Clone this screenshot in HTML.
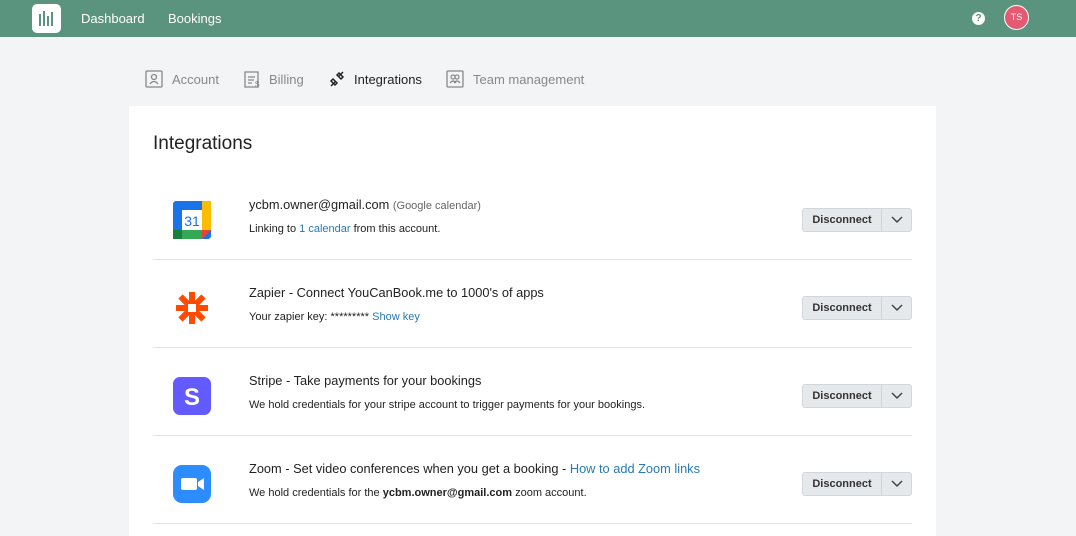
<!DOCTYPE html>
<html><head><style>
*{box-sizing:border-box;margin:0;padding:0}
body{width:1076px;height:530px;overflow:hidden;background:#f2f4f6;font-family:"Liberation Sans",Arial,sans-serif;position:relative}
.hdr{position:absolute;left:0;top:0;width:1076px;height:37px;background:#5a937e}
.logo{position:absolute;left:32px;top:4px;width:29px;height:29px;background:#fff;border-radius:5px}
.nav{position:absolute;top:11px;color:#fff;font-size:13px}
.help{position:absolute;left:972px;top:12px;width:13px;height:13px;border-radius:50%;background:#fff;color:#5a937e;font-size:10px;font-weight:bold;text-align:center;line-height:13px}
.av{position:absolute;left:1004px;top:5px;width:25px;height:25px;border-radius:50%;background:#e45a73;border:1px solid #fff;color:#fff;font-size:9px;text-align:center;line-height:23px}
.tab{position:absolute;top:72px;font-size:13px;color:#888}
.ti{position:absolute;top:70px;width:18px;height:18px}
.card{position:absolute;left:129px;top:106px;width:807px;height:430px;background:#fff}
h1{position:absolute;left:24px;top:27px;font-size:19px;font-weight:normal;color:#222}
.row{position:absolute;left:24px;width:759px;height:88px;border-bottom:1px solid #e3e3e3}
.ic{position:absolute;left:20px;top:29px;width:38px;height:38px}
.t1{position:absolute;left:96px;top:25px;font-size:12.8px;color:#222}
.t2{position:absolute;left:96px;top:51px;font-size:11px;color:#222}
.sm{font-size:11px;color:#666}
a{color:#2a7ab0;text-decoration:none}
.btn{position:absolute;left:649px;top:36px;width:110px;height:24px;background:#e6e9ec;border:1px solid #d3d7db;border-radius:3px;font-size:11px;font-weight:bold;color:#333}
.btn span{position:absolute;left:0;top:0;width:79px;height:22px;line-height:22px;text-align:center;border-right:1px solid #cfd3d7}
.btn svg{position:absolute;left:88px;top:7px}
</style></head><body>
<div class="hdr">
<div class="logo"><svg width="29" height="29"><g stroke="#5a937e" stroke-width="2"><line x1="8" y1="10" x2="8" y2="22"/><line x1="12" y1="7" x2="12" y2="22"/><line x1="16" y1="12" x2="16" y2="22"/><line x1="20" y1="8" x2="20" y2="22"/></g></svg></div>
<div class="nav" style="left:81px">Dashboard</div>
<div class="nav" style="left:168px">Bookings</div>
<div class="help">?</div>
<div class="av">TS</div>
</div>
<svg class="ti" style="left:145px" viewBox="0 0 18 18"><rect x="1" y="1" width="16" height="16" rx="1" fill="none" stroke="#888" stroke-width="1.3"/><circle cx="9" cy="7" r="2.5" fill="none" stroke="#888" stroke-width="1.3"/><path d="M5 14q4-5 8 0" fill="none" stroke="#888" stroke-width="1.3"/></svg>
<div class="tab" style="left:172px">Account</div>
<svg class="ti" style="left:243px" viewBox="0 0 18 18"><path d="M2 2h13v15H2z M5 7h7M5 10h6M5 13h4" fill="none" stroke="#888" stroke-width="1.3"/><text x="12" y="17" font-size="8" fill="#888">$</text></svg>
<div class="tab" style="left:269px">Billing</div>
<svg class="ti" style="left:328px" viewBox="0 0 18 18"><path d="M3 16l4-4M11 6l4-4M5 9l4 4-2 2-4-4zM9 5l4 4 2-2-4-4z" fill="none" stroke="#222" stroke-width="1.5"/></svg>
<div class="tab" style="left:354px;color:#222">Integrations</div>
<svg class="ti" style="left:446px" viewBox="0 0 18 18"><rect x="1" y="1" width="16" height="16" rx="1" fill="none" stroke="#888" stroke-width="1.3"/><circle cx="7" cy="7" r="2" fill="none" stroke="#888" stroke-width="1.2"/><circle cx="11" cy="7" r="2" fill="none" stroke="#888" stroke-width="1.2"/><path d="M4 13q3-4 6 0M8 13q3-4 6 0" fill="none" stroke="#888" stroke-width="1.2"/></svg>
<div class="tab" style="left:473px">Team management</div>
<div class="card">
<h1>Integrations</h1>
<div class="row" style="top:66px">
<svg class="ic" viewBox="0 0 38 38"><rect x="0" y="0" width="38" height="38" rx="3" fill="#1a73e8"/><rect x="29" y="0" width="9" height="29" fill="#fbbc04"/><rect x="0" y="29" width="29" height="9" fill="#34a853"/><rect x="0" y="29" width="9" height="9" fill="#188038"/><path d="M29 29h9l-9 9z" fill="#ea4335"/><rect x="9" y="9" width="20" height="20" fill="#fff"/><text x="19" y="25" font-size="14" text-anchor="middle" fill="#1a73e8" font-family="Liberation Sans">31</text></svg>
<div class="t1">ycbm.owner@gmail.com <span class="sm">(Google calendar)</span></div>
<div class="t2">Linking to <a>1 calendar</a> from this account.</div>
<div class="btn"><span>Disconnect</span><svg width="12" height="8"><path d="M1 1l5 5 5-5" fill="none" stroke="#444" stroke-width="1.5"/></svg></div>
</div>
<div class="row" style="top:154px">
<svg class="ic" viewBox="0 0 38 38"><g stroke="#ff4a00" stroke-width="6"><line x1="19" y1="3" x2="19" y2="35"/><line x1="3" y1="19" x2="35" y2="19"/><line x1="7.5" y1="7.5" x2="30.5" y2="30.5"/><line x1="30.5" y1="7.5" x2="7.5" y2="30.5"/></g><rect x="15" y="15" width="8" height="8" fill="#fff"/></svg>
<div class="t1">Zapier - Connect YouCanBook.me to 1000's of apps</div>
<div class="t2">Your zapier key: ********* <a>Show key</a></div>
<div class="btn"><span>Disconnect</span><svg width="12" height="8"><path d="M1 1l5 5 5-5" fill="none" stroke="#444" stroke-width="1.5"/></svg></div>
</div>
<div class="row" style="top:242px">
<svg class="ic" viewBox="0 0 38 38"><rect width="38" height="38" rx="7" fill="#635bff"/><text x="19" y="28" font-size="24" font-weight="bold" text-anchor="middle" fill="#fff" font-family="Liberation Sans">S</text></svg>
<div class="t1">Stripe - Take payments for your bookings</div>
<div class="t2">We hold credentials for your stripe account to trigger payments for your bookings.</div>
<div class="btn"><span>Disconnect</span><svg width="12" height="8"><path d="M1 1l5 5 5-5" fill="none" stroke="#444" stroke-width="1.5"/></svg></div>
</div>
<div class="row" style="top:330px">
<svg class="ic" viewBox="0 0 38 38"><rect width="38" height="38" rx="9" fill="#2d8cff"/><rect x="8" y="13" width="16" height="12" rx="2" fill="#fff"/><path d="M25 17l6-4v12l-6-4z" fill="#fff"/></svg>
<div class="t1">Zoom - Set video conferences when you get a booking - <a>How to add Zoom links</a></div>
<div class="t2">We hold credentials for the <b>ycbm.owner@gmail.com</b> zoom account.</div>
<div class="btn"><span>Disconnect</span><svg width="12" height="8"><path d="M1 1l5 5 5-5" fill="none" stroke="#444" stroke-width="1.5"/></svg></div>
</div>
</div>
</body></html>
